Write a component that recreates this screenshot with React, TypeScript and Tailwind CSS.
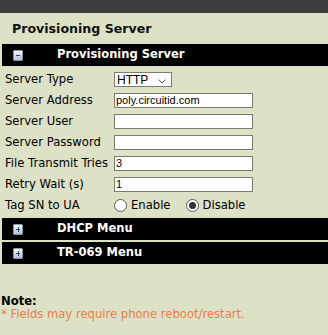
import React from "react"

const font = { fontFamily: "'DejaVu Sans', Verdana, sans-serif" }

function BoxIcon({ plus }: { plus?: boolean }) {
  return (
    <div className="relative w-[10px] h-[11px] rounded-[1px] border border-[#8793a6] bg-gradient-to-b from-[#f6f8fc] to-[#b4c2d6]">
      <div className="absolute left-[2px] right-[2px] top-[4px] h-[1px] bg-[#34466a]" />
      {plus && <div className="absolute top-[2px] bottom-[2px] left-[3.5px] w-[1px] bg-[#34466a]" />}
    </div>
  )
}

function Bar({ title, plus }: { title: string; plus?: boolean }) {
  return (
    <div className="ml-[2px] h-[22px] bg-black flex items-center">
      <div className="w-[55px] pl-[11px]">
        <BoxIcon plus={plus} />
      </div>
      <span className="text-white font-bold text-[11.5px]">{title}</span>
    </div>
  )
}

function Row({ label, children }: { label: string; children: React.ReactNode }) {
  return (
    <div className="h-[21px] flex items-center">
      <div className="w-[114px] pl-[5px] text-[11.6px] text-black whitespace-nowrap">{label}</div>
      {children}
    </div>
  )
}

function TextBox({ value }: { value?: string }) {
  return (
    <div
      className="w-[139px] h-[15px] bg-white border border-[#7b7b70] text-[11px] leading-[13px] pl-[1px] text-black"
      style={{ fontFamily: "'Liberation Sans', Arial, sans-serif" }}
    >
      {value}
    </div>
  )
}

function Radio({ checked, label }: { checked?: boolean; label: string }) {
  return (
    <div className="flex items-center gap-[4px]">
      <div className="w-[13px] h-[13px] rounded-full border border-[#55595f] bg-white flex items-center justify-center">
        {checked && <div className="w-[7px] h-[7px] rounded-full bg-[#333]" />}
      </div>
      <span className="text-[11.6px]">{label}</span>
    </div>
  )
}

export default function App() {
  return (
    <div className="w-[328px] h-[335px] bg-[#dde1c6] overflow-hidden" style={font}>
      <div className="h-[13px] bg-[#3d3d3d]" />
      <div className="h-[31px] flex items-center pl-[12px] pt-[1px] text-[12.6px] font-bold text-[#111]">
        Provisioning Server
      </div>
      <Bar title="Provisioning Server" />
      <div className="flex flex-col pt-[3px]">
        <Row label="Server Type">
          <div
            className="w-[58px] h-[15px] bg-white border border-[#7b7b70] flex items-center justify-between pl-[2px] pr-[5px] text-[12px]"
            style={{ fontFamily: "'Liberation Sans', Arial, sans-serif" }}
          >
            <span>HTTP</span>
            <svg width="8" height="5" viewBox="0 0 8 5" className="mt-[3px]">
              <path d="M0.5 0.5 L4 4 L7.5 0.5" stroke="#555" fill="none" strokeWidth="1" />
            </svg>
          </div>
        </Row>
        <Row label="Server Address">
          <TextBox value="poly.circuitid.com" />
        </Row>
        <Row label="Server User">
          <TextBox />
        </Row>
        <Row label="Server Password">
          <TextBox />
        </Row>
        <Row label="File Transmit Tries">
          <TextBox value="3" />
        </Row>
        <Row label="Retry Wait (s)">
          <TextBox value="1" />
        </Row>
        <Row label="Tag SN to UA">
          <div className="flex items-center gap-[15px]">
            <Radio label="Enable" />
            <Radio checked label="Disable" />
          </div>
        </Row>
      </div>
      <div className="mt-[2px] flex flex-col gap-[2px]">
        <Bar title="DHCP Menu" plus />
        <Bar title="TR-069 Menu" plus />
      </div>
      <div className="mt-[31px] pl-[1px] text-[11.6px] leading-[13px]">
        <div className="font-bold text-black">Note:</div>
        <div className="text-[#e8804a]">* Fields may require phone reboot/restart.</div>
      </div>
    </div>
  )
}
